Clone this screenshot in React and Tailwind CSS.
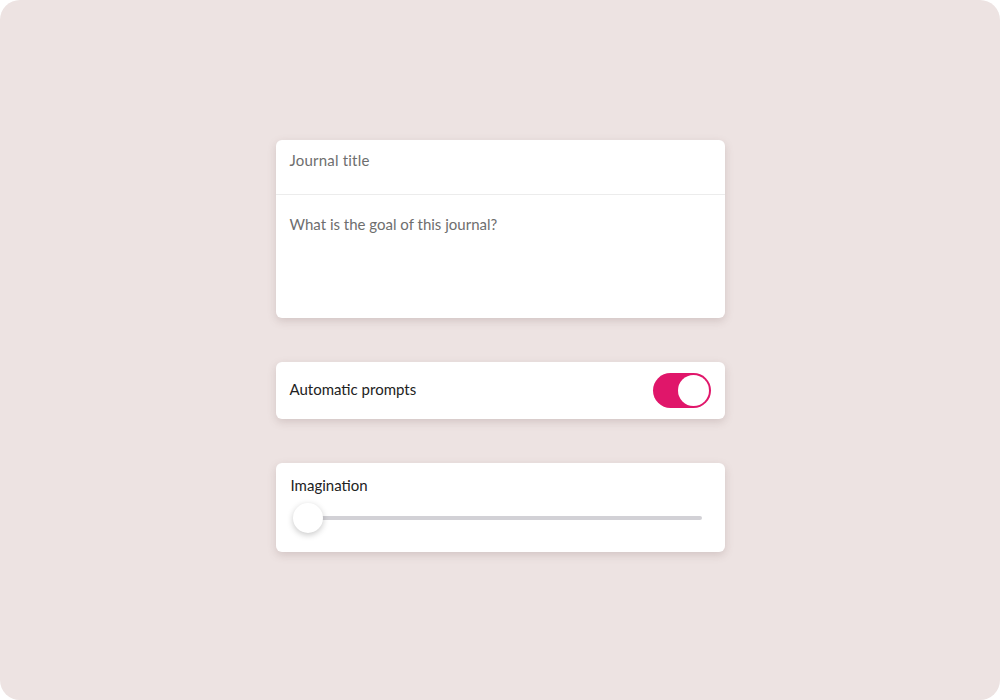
import React from 'react';

export default function App() {
    return (
        <div className="w-[1000px] h-[700px] bg-white">
            <div
                className="w-full h-full rounded-[20px] bg-[#ede3e2] flex flex-col items-center pt-[140px] gap-[44px]"
                style={{ fontFamily: 'Lato, "Noto Sans", sans-serif' }}
            >
                {/* Title + goal */}
                <div className="w-[449px] h-[178px] bg-white rounded-[6px] shadow-[0_3px_8px_rgba(120,90,90,0.22)] flex flex-col">
                    <div className="h-[55px] border-b border-[#ececec] px-[14px] pt-[9px] text-[15px] tracking-[0.2px] text-[#6e6e6e]">
                        Journal title
                    </div>
                    <div className="px-[14px] pt-[18px] text-[15px] text-[#6e6e6e]">
                        What is the goal of this journal?
                    </div>
                </div>

                {/* Toggle row */}
                <div className="w-[449px] h-[57px] bg-white rounded-[6px] shadow-[0_3px_8px_rgba(120,90,90,0.22)] flex items-center justify-between px-[14px]">
                    <span className="text-[15px] text-[#222] -mt-[2px]">Automatic prompts</span>
                    <div className="w-[58px] h-[35px] -mt-[1px] rounded-full bg-[#e0166a] flex items-center justify-end p-[2px]">
                        <div className="w-[31px] h-[31px] rounded-full bg-white" />
                    </div>
                </div>

                {/* Slider */}
                <div className="w-[449px] h-[89px] bg-white rounded-[6px] shadow-[0_3px_8px_rgba(120,90,90,0.22)] px-[15px] pt-[11px]">
                    <div className="text-[15px] text-[#222]">Imagination</div>
                    <div className="relative mt-[6px] h-[30px] flex items-center">
                        <div className="ml-[16px] mr-[8px] flex-1 h-[4px] rounded-full bg-[#d2d1d6]" />
                        <div className="absolute left-[2px] top-0 w-[30px] h-[30px] rounded-full bg-white shadow-[0_2px_6px_rgba(0,0,0,0.22)]" />
                    </div>
                </div>
            </div>
        </div>
    );
}
